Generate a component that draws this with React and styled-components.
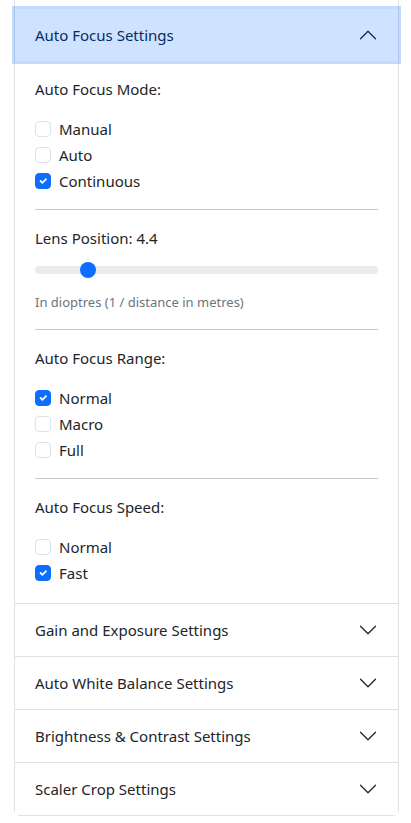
import React from 'react'
import styled, { createGlobalStyle } from 'styled-components'

const GlobalStyle = createGlobalStyle`
  body {
    margin: 0;
    background: #fff;
    font-family: 'Noto Sans', sans-serif;
    color: #212529;
  }
`

const Page = styled.div`
  padding: 0 12px 8px 14px;
`

const Accordion = styled.div`
  border: 1px solid #dee2e6;
  border-top: 0;
  border-radius: 0 0 6px 6px;
  padding-top: 9px;
`

const Item = styled.div`
  & + & {
    border-top: 1px solid #dee2e6;
  }
`

const Header = styled.button`
  display: flex;
  align-items: center;
  justify-content: space-between;
  width: 100%;
  height: 52px;
  padding: 0 20px;
  border: 0;
  margin: 0;
  font: inherit;
  font-size: 15px;
  text-align: left;
  cursor: pointer;
  position: relative;
  background: ${p => (p.$open ? '#cfe2ff' : '#fff')};
  color: ${p => (p.$open ? '#052c65' : '#212529')};
  box-shadow: ${p => (p.$open ? '0 0 0 3px rgba(13,110,253,.25)' : 'none')};
  svg {
    transform: ${p => (p.$open ? 'rotate(180deg)' : 'none')};
  }
`

const Body = styled.div`
  padding: 16px 20px 18px;
`

const Group = styled.div`
  display: flex;
  flex-direction: column;
`

const GroupLabel = styled.div`
  font-size: 15px;
  line-height: 24px;
  margin-bottom: ${p => p.$mb || 16}px;
`

const CheckList = styled.div`
  display: flex;
  flex-direction: column;
  gap: 2px;
`

const CheckRow = styled.label`
  display: flex;
  align-items: center;
  gap: 8px;
  height: 24px;
  font-size: 15px;
`

const Box = styled.span`
  width: 16px;
  height: 16px;
  box-sizing: border-box;
  border-radius: 4px;
  border: 1px solid ${p => (p.$checked ? '#0d6efd' : '#dee2e6')};
  background: ${p => (p.$checked ? '#0d6efd' : '#fff')};
  display: flex;
  align-items: center;
  justify-content: center;
`

const Divider = styled.hr`
  border: 0;
  border-top: 1px solid #c8c9ca;
  margin: 16px 0;
`

const Range = styled.div`
  position: relative;
  height: 24px;
  display: flex;
  align-items: center;
`

const Track = styled.div`
  width: 100%;
  height: 8px;
  border-radius: 4px;
  background: #e9ecef;
`

const Thumb = styled.div`
  position: absolute;
  top: 4px;
  width: 16px;
  height: 16px;
  margin-left: -8px;
  border-radius: 50%;
  background: #0d6efd;
`

const Help = styled.div`
  margin-top: 10px;
  font-size: 13px;
  line-height: 21px;
  color: #6c757d;
`

const Chevron = () => (
  <svg width="20" height="20" viewBox="0 0 16 16" fill="none">
    <path d="M2 5L8 11L14 5" stroke="currentColor" strokeWidth="1" strokeLinecap="round" strokeLinejoin="round" />
  </svg>
)

const Check = ({ label, checked }) => (
  <CheckRow>
    <Box $checked={checked}>
      {checked && (
        <svg width="12" height="12" viewBox="0 0 20 20" fill="none">
          <path d="M6 10l3 3l6-6" stroke="#fff" strokeWidth="3" strokeLinecap="round" strokeLinejoin="round" />
        </svg>
      )}
    </Box>
    {label}
  </CheckRow>
)

const Options = ({ title, items }) => (
  <Group>
    <GroupLabel>{title}</GroupLabel>
    <CheckList>
      {items.map(([label, checked]) => (
        <Check key={label} label={label} checked={checked} />
      ))}
    </CheckList>
  </Group>
)

const closed = [
  'Gain and Exposure Settings',
  'Auto White Balance Settings',
  'Brightness & Contrast Settings',
  'Scaler Crop Settings',
]

const App = () => {
  const lens = 4.4
  const frac = lens / 32
  return (
    <Page>
      <GlobalStyle />
      <Accordion>
        <Item>
          <Header $open>
            Auto Focus Settings
            <Chevron />
          </Header>
          <Body>
            <Options
              title="Auto Focus Mode:"
              items={[['Manual', false], ['Auto', false], ['Continuous', true]]}
            />
            <Divider />
            <Group>
              <GroupLabel $mb={8}>Lens Position: {lens}</GroupLabel>
              <Range>
                <Track />
                <Thumb style={{ left: `calc(8px + (100% - 16px) * ${frac})` }} />
              </Range>
              <Help>In dioptres (1 / distance in metres)</Help>
            </Group>
            <Divider />
            <Options
              title="Auto Focus Range:"
              items={[['Normal', true], ['Macro', false], ['Full', false]]}
            />
            <Divider />
            <Options title="Auto Focus Speed:" items={[['Normal', false], ['Fast', true]]} />
          </Body>
        </Item>
        {closed.map(t => (
          <Item key={t}>
            <Header>
              {t}
              <Chevron />
            </Header>
          </Item>
        ))}
      </Accordion>
    </Page>
  )
}

export default App
